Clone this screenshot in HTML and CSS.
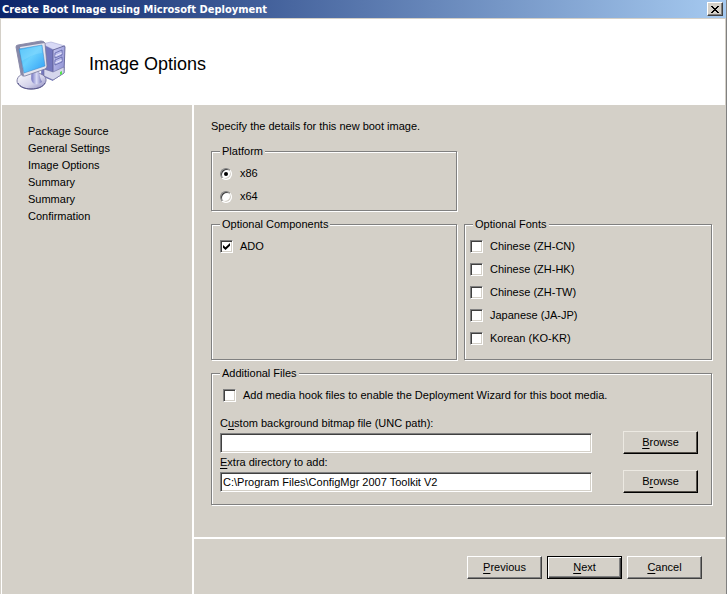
FILE: index.html
```html
<!DOCTYPE html>
<html lang="en">
<head>
    <meta charset="UTF-8">
    <meta name="viewport" content="width=device-width, initial-scale=1.0">
    <title>Create Boot Image using Microsoft Deployment</title>
    <link rel="stylesheet" href="styles.css">
</head>
<body>
<div class="window">

    <!-- Title bar -->
    <div class="titlebar">
        <span class="title">Create Boot Image using Microsoft Deployment</span>
        <button class="close" type="button" aria-label="Close">
            <svg width="8" height="7" viewBox="0 0 8 7" shape-rendering="crispEdges"><path d="M0 0h2v1h1v1h2v-1h1v-1h2v1h-1v1h-1v1h-1v1h1v1h1v1h1v1h-2v-1h-1v-1h-2v1h-1v1h-2v-1h1v-1h1v-1h1v-1h-1v-1h-1v-1h-1z"/></svg>
        </button>
    </div>

    <!-- Page header -->
    <header class="header">
        <svg class="computer" width="52" height="52" viewBox="0 0 52 52" aria-hidden="true">
            <defs>
                <linearGradient id="screen" x1="0" y1="0" x2="1" y2="1">
                    <stop offset="0" stop-color="#35b4f6"/>
                    <stop offset=".45" stop-color="#6ad0fd"/>
                    <stop offset="1" stop-color="#2e9df6"/>
                </linearGradient>
                <linearGradient id="base" x1="0" y1="0" x2="1" y2="1">
                    <stop offset="0" stop-color="#ffffff"/>
                    <stop offset=".6" stop-color="#d3d2ea"/>
                    <stop offset="1" stop-color="#8583bd"/>
                </linearGradient>
                <linearGradient id="tower" x1="0" y1="0" x2="1" y2="1">
                    <stop offset="0" stop-color="#c5c6f0"/>
                    <stop offset="1" stop-color="#8588ce"/>
                </linearGradient>
                <linearGradient id="neck" x1="0" y1="0" x2="1" y2="0">
                    <stop offset="0" stop-color="#7274c0"/>
                    <stop offset=".5" stop-color="#d9daf5"/>
                    <stop offset="1" stop-color="#7678b8"/>
                </linearGradient>
            </defs>
            <path d="M27 6l9-2 14 4-11 4z" fill="#d8d9f6" stroke="#a5a6d2" stroke-width=".6"/>
            <path d="M27 6l12 6-1 31-12-5z" fill="#7477bd"/>
            <path d="M38 12l11-4q1 0 1 1l-1 26-11 7z" fill="url(#tower)" stroke="#55578d" stroke-width=".8"/>
            <path d="M29 31l9 3 11-5v6l-11 7-9-4z" fill="#d5d6ec" stroke="#6b6d9f" stroke-width=".6"/>
            <path d="M40 15l7-3v5l-7 3zM40 22l7-3v5l-7 3z" fill="#b9bbec" stroke="#555a9f" stroke-width=".7"/>
            <path d="M40 18l7-3M40 25l7-3" stroke="#f2f3ff" stroke-width=".8"/>
            <path d="M45 34l2-1v3l-2 1z" fill="#57e54c"/>
            <path d="M2 43c0-5 6-9 14-9 9 0 16 4 15 9-1 5-8 8-15 8S2 48 2 43z" fill="url(#base)" stroke="#77769f" stroke-width=".9"/>
            <path d="M3 45c2 4 7 6 13 6 7 0 12-2 14-6" fill="none" stroke="#56558c" stroke-width="1"/>
            <path d="M17 32l7-2q0 9 3 14-5 4-9 1-3-2-1-13z" fill="url(#neck)"/>
            <path d="M1 9q0-2 2-2l23-4q3 0 4 2l2 23q0 2-2 3L10 38q-3 1-4-2z" fill="#e4e4ee" stroke="#77779c" stroke-width=".8"/>
            <path d="M1 9q0-2 2-2l23-4q3 0 4 2L5 9l4 29q-2 0-3-2z" fill="#8889a8"/>
            <path d="M4 11l23-4 3 21-21 7z" fill="url(#screen)" stroke="#4380c0" stroke-width=".5"/>
            <path d="M5 12l21-4 1 7C18 16 12 20 7 23z" fill="#8edcff" opacity=".4"/>
        </svg>
        <h1 class="heading">Image Options</h1>
    </header>

    <div class="body">
        <!-- Wizard steps -->
        <nav class="steps">
            <ul>
                <li>Package Source</li>
                <li>General Settings</li>
                <li>Image Options</li>
                <li>Summary</li>
                <li>Summary</li>
                <li>Confirmation</li>
            </ul>
        </nav>

        <form class="main">
            <div class="content">
                <p class="intro">Specify the details for this new boot image.</p>

                <div class="groups">
                    <fieldset class="group">
                        <legend>Platform</legend>
                        <label class="option"><input class="radio" type="radio" name="platform" checked>x86</label>
                        <label class="option"><input class="radio" type="radio" name="platform">x64</label>
                    </fieldset>

                    <fieldset class="group components">
                        <legend>Optional Components</legend>
                        <label class="option"><input class="check" type="checkbox" checked>ADO</label>
                    </fieldset>

                    <fieldset class="group fonts">
                        <legend>Optional Fonts</legend>
                        <label class="option"><input class="check" type="checkbox">Chinese (ZH-CN)</label>
                        <label class="option"><input class="check" type="checkbox">Chinese (ZH-HK)</label>
                        <label class="option"><input class="check" type="checkbox">Chinese (ZH-TW)</label>
                        <label class="option"><input class="check" type="checkbox">Japanese (JA-JP)</label>
                        <label class="option"><input class="check" type="checkbox">Korean (KO-KR)</label>
                    </fieldset>

                    <fieldset class="group files">
                        <legend>Additional Files</legend>
                        <label class="option hook"><input class="check" type="checkbox">Add media hook files to enable the Deployment Wizard for this boot media.</label>
                        <div class="paths">
                            <label class="path-label" for="bitmap">C<u>u</u>stom background bitmap file (UNC path):</label>
                            <input class="text" type="text" id="bitmap">
                            <button class="btn browse" type="button"><u>B</u>rowse</button>
                            <label class="path-label" for="extra"><u>E</u>xtra directory to add:</label>
                            <input class="text" type="text" id="extra" value="C:\Program Files\ConfigMgr 2007 Toolkit V2">
                            <button class="btn browse" type="button">B<u>r</u>owse</button>
                        </div>
                    </fieldset>
                </div>
            </div>

            <!-- Wizard buttons -->
            <div class="footer">
                <button class="btn" type="button"><u>P</u>revious</button>
                <button class="btn default" type="button"><u>N</u>ext</button>
                <button class="btn" type="button"><u>C</u>ancel</button>
            </div>
        </form>
    </div>
</div>
</body>
</html>
```

FILE: styles.css
```css
* {
    box-sizing: border-box;
}

body {
    margin: 0;
    background: #d4d0c8;
    color: #000;
    font-family: "Liberation Sans", Arial, sans-serif;
    font-size: 11px;
    line-height: 17px;
}

button,
input {
    font: inherit;
    color: inherit;
}

.window {
    display: flex;
    flex-direction: column;
    min-height: 100vh;
    border-right: 1px solid #808080;
}

/* Title bar */
.titlebar {
    display: flex;
    align-items: center;
    justify-content: space-between;
    height: 18px;
    padding: 0 3px 0 2px;
    background: linear-gradient(to right, #0a246a, #a6caf0);
    color: #fff;
}

.title {
    font-family: "DejaVu Sans Condensed", "Noto Sans", Tahoma, sans-serif;
    font-size: 11px;
    font-weight: bold;
}

.close {
    display: flex;
    align-items: center;
    justify-content: center;
    width: 16px;
    height: 14px;
    padding: 0;
    background: #d4d0c8;
    border: 1px solid;
    border-color: #fff #404040 #404040 #fff;
    box-shadow: inset -1px -1px #808080;
}

/* Page header */
.header {
    display: flex;
    align-items: center;
    gap: 22px;
    height: 86px;
    margin: 1px 1px 0;
    padding: 4px 0 0 14px;
    background: #fff;
}

.heading {
    margin: 0;
    font-size: 18px;
    font-weight: normal;
    line-height: 20px;
}

.body {
    display: flex;
    flex: 1;
    margin: 0 1px;
    border-left: 1px solid #fff;
}

/* Wizard steps */
.steps {
    flex: 0 0 192px;
    padding: 18px 0 0 26px;
    border-right: 2px solid #fff;
}

.steps ul {
    margin: 0;
    padding: 0;
    list-style: none;
}

.main {
    display: flex;
    flex: 1;
    flex-direction: column;
}

.content {
    flex: 1;
    padding: 13px 12px 31px 17px;
}

.intro {
    margin: 0 0 9px;
}

/* Group boxes */
.groups {
    display: grid;
    grid-template-columns: 247fr 249fr;
    gap: 5px 6px;
}

/* etched line: grey with a white line below and to the right of it */
.group {
    min-width: 0;
    margin: 0 1px 1px 0;
    padding: 4px 8px 2px;
    border: 1px solid #808080;
    box-shadow: 1px 1px #fff, inset 1px 1px #fff;
}

.group legend {
    padding: 1px 2px 0;
    background: #d4d0c8;
    line-height: 13px;
}

.components {
    grid-column: 1;
}

.fonts {
    padding: 4px 5px 9px;
}

.fonts legend {
    margin-left: 3px;
}

.files {
    grid-column: 1 / 3;
    padding: 4px 13px 11px 8px;
}

.option {
    display: flex;
    align-items: center;
    gap: 7px;
    height: 23px;
}

.hook {
    margin: 0 0 8px 3px;
}

.check,
.radio {
    appearance: none;
    flex: none;
    width: 13px;
    height: 13px;
    margin: 0;
    background: #fff;
    border: 1px solid;
    border-color: #808080 #fff #fff #808080;
    box-shadow: inset 1px 1px #404040, inset -1px -1px #d4d0c8;
}

.radio {
    display: grid;
    place-items: center;
    width: 12px;
    height: 12px;
    margin-right: 1px;
    border-radius: 50%;
}

.radio:checked::after {
    content: "";
    width: 4px;
    height: 4px;
    border-radius: 50%;
    background: #000;
}

.check:checked {
    display: grid;
    place-items: center;
}

.check:checked::after {
    content: "";
    width: 7px;
    height: 7px;
    background: #000;
    clip-path: polygon(0 28%, 36% 62%, 100% 0, 100% 40%, 36% 100%, 0 68%);
}

/* Path fields */
.paths {
    display: grid;
    grid-template-columns: 1fr 75px;
    column-gap: 31px;
    align-items: center;
}

.path-label {
    grid-column: 1 / 3;
    line-height: 16px;
}

.text {
    width: 100%;
    height: 20px;
    padding: 0 2px;
    background: #fff;
    border: 1px solid;
    border-color: #808080 #fff #fff #808080;
    box-shadow: inset 1px 1px #404040, inset -1px -1px #d4d0c8;
}

/* Push buttons */
.btn {
    width: 75px;
    height: 23px;
    padding: 0;
    background: #d4d0c8;
    border: 1px solid;
    border-color: #fff #404040 #404040 #fff;
    box-shadow: inset -1px -1px #808080;
}

.browse {
    border-color: #ece9e2 #000 #000 #ece9e2;
    box-shadow: inset -1px -1px #55504a;
}

.default {
    border-color: #000;
    box-shadow: inset 1px 1px #fff, inset -1px -1px #404040, inset -2px -2px #808080;
}

.btn u,
.path-label u {
    text-underline-offset: 2px;
}

.footer {
    display: flex;
    justify-content: flex-end;
    gap: 5px;
    padding: 17px 23px 15px;
    border-top: 2px solid #fff;
}
```
